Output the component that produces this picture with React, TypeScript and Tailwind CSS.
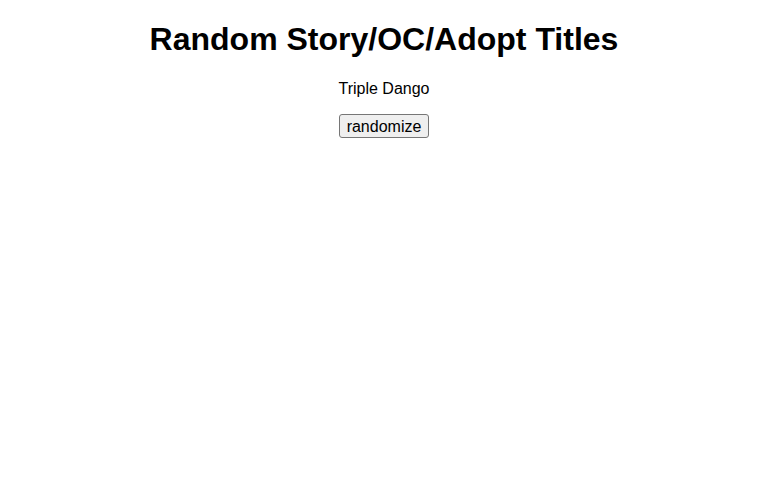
import React, { useState } from 'react';

const titles = ['Triple Dango', 'Moonlit Orchard', 'The Paper Fox', 'Cinder & Salt', 'Glass Garden'];

export default function App() {
  const [title, setTitle] = useState(titles[0]);

  const randomize = () => {
    setTitle(titles[Math.floor(Math.random() * titles.length)]);
  };

  return (
    <div className="min-h-screen bg-white text-center text-black font-['Liberation_Sans',Arial,sans-serif]">
      <h1 className="pt-[21px] text-[32px] font-bold leading-[37px]">Random Story/OC/Adopt Titles</h1>
      <p className="mt-[22px] text-base leading-[18px]">{title}</p>
      <div className="mt-4">
        <button
          onClick={randomize}
          className="h-[24px] rounded-[3px] border border-[#767676] bg-[#efefef] px-[7px] text-base leading-[19px] text-black"
        >
          randomize
        </button>
      </div>
    </div>
  );
}
